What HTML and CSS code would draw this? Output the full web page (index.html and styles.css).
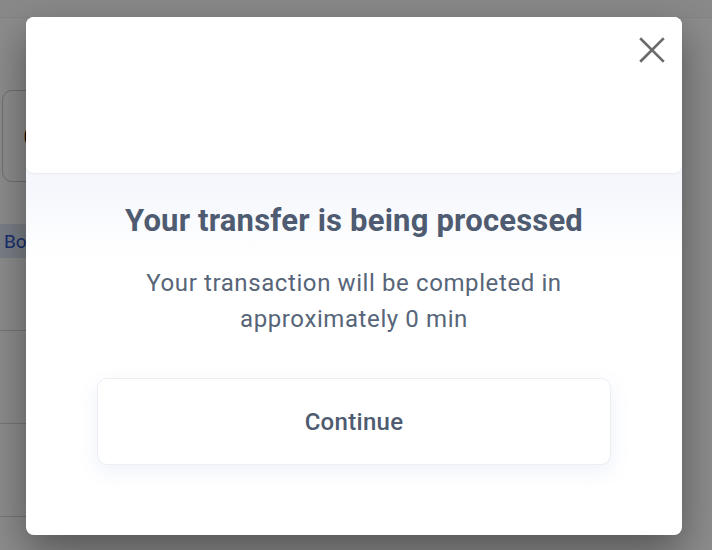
FILE: index.html
```html
<!DOCTYPE html>
<html>
<head>
<meta charset="utf-8">
<link rel="stylesheet" href="styles.css">
</head>
<body>
<div class="page">
  <div class="topbar"></div>
  <div class="page-body">
    <div class="side">
      <div class="field-card"><span class="field-glyph">C</span></div>
      <div class="tab-band"><span class="tab-text">Bo</span></div>
      <div class="row-line r1"></div>
      <div class="row-line r2"></div>
      <div class="row-line r3"></div>
    </div>
  </div>
</div>
<div class="overlay"></div>
<div class="modal">
  <div class="modal-header">
    <button class="close" aria-label="Close">
      <svg viewBox="0 0 24 24" width="26" height="26"><path d="M2 2 L22 22 M22 2 L2 22" stroke="#6b6b6b" stroke-width="2.5" stroke-linecap="square" fill="none"/></svg>
    </button>
  </div>
  <div class="modal-body">
    <h2 class="title">Your transfer is being processed</h2>
    <p class="desc">Your transaction will be completed in<br>approximately 0 min</p>
    <button class="continue">Continue</button>
  </div>
</div>
</body>
</html>
```

FILE: styles.css
```css
html, body {
  margin: 0;
  padding: 0;
  width: 712px;
  height: 550px;
  overflow: hidden;
  font-family: Roboto, "Liberation Sans", sans-serif;
  background: #fff;
}
.page {
  width: 712px;
  height: 550px;
  display: flex;
  flex-direction: column;
  background: #fff;
}
.topbar {
  height: 17px;
  background: #fafafa;
  border-bottom: 1px solid #f0f0f0;
}
.page-body {
  flex: 1;
  display: flex;
}
.side {
  width: 60px;
  display: flex;
  flex-direction: column;
  padding-top: 72px;
}
.field-card {
  margin-left: 2px;
  width: 80px;
  height: 92px;
  border: 1.5px solid #c9ccd4;
  border-radius: 10px;
  box-sizing: border-box;
  display: flex;
  align-items: center;
  padding-left: 20px;
}
.field-glyph {
  font-size: 30px;
  color: #000;
}
.tab-band {
  margin-top: 42px;
  height: 34px;
  background: #dfe7f5;
  display: flex;
  align-items: center;
  padding-left: 4px;
}
.tab-text {
  color: #2a55c8;
  font-size: 19px;
}
.row-line {
  height: 1px;
  background: #d6d8dc;
}
.r1 { margin-top: 72px; }
.r2 { margin-top: 92px; }
.r3 { margin-top: 92px; }

.overlay {
  position: absolute;
  inset: 0;
  background: rgba(0, 0, 0, 0.45);
}
.modal {
  position: absolute;
  left: 26px;
  top: 17px;
  width: 656px;
  height: 518px;
  border-radius: 8px;
  background: linear-gradient(to bottom, #f2f4fa 0, #f5f7fc 170px, #ffffff 240px);
  box-shadow: 0 16px 40px rgba(0,0,0,0.4);
  display: flex;
  flex-direction: column;
}
.modal-header {
  height: 156px;
  background: #fff;
  border-radius: 8px;
  box-shadow: 0 1px 2px rgba(20, 30, 60, 0.06);
  display: flex;
  justify-content: flex-end;
  align-items: flex-start;
}
.close {
  margin: 20px 17px 0 0;
  padding: 0;
  border: 0;
  background: transparent;
  width: 26px;
  height: 26px;
  display: flex;
}
.modal-body {
  display: flex;
  flex-direction: column;
  align-items: center;
}
.title {
  margin: 28px 0 0 0;
  font-size: 31px;
  font-weight: 700;
  color: #4e5b70;
  line-height: 40px;
  letter-spacing: 0.2px;
  white-space: nowrap;
}
.desc {
  margin: 24px 0 0 0;
  font-size: 24px;
  line-height: 36px;
  color: #576579;
  text-align: center;
  letter-spacing: 0.6px;
}
.continue {
  margin-top: 41px;
  width: 514px;
  height: 87px;
  padding-top: 2px;
  background: #fff;
  border: 1px solid #eceef2;
  border-radius: 10px;
  box-shadow: 0 6px 20px rgba(90, 120, 220, 0.10);
  font-family: Roboto, "Liberation Sans", sans-serif;
  font-size: 24px;
  font-weight: 500;
  letter-spacing: 0.3px;
  color: #4e5b70;
}
```
